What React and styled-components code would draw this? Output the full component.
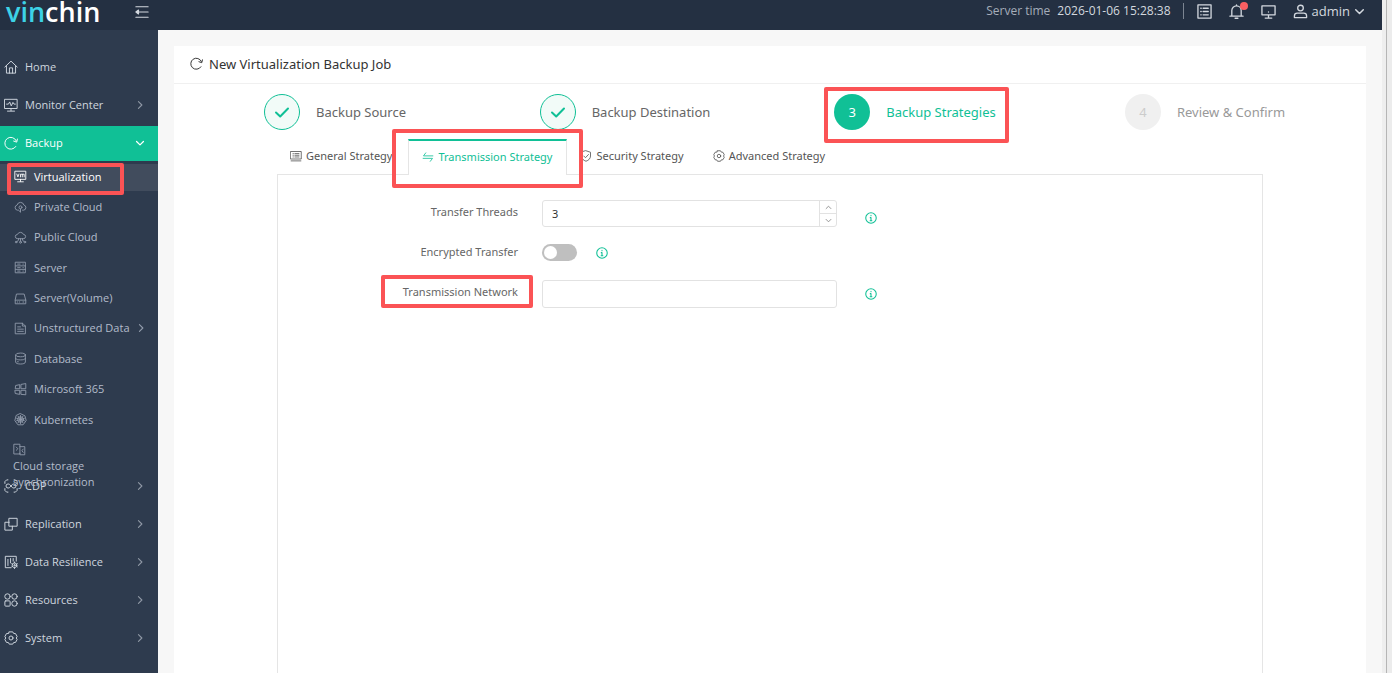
import React, { useState } from "react";
import styled, { createGlobalStyle, css } from "styled-components";

const GlobalStyle = createGlobalStyle`
  * {
    box-sizing: border-box;
  }

  body {
    margin: 0;
    background: #f7f7f7;
    font-family: "Open Sans", "Noto Sans", sans-serif;
    font-size: 11px;
    color: #666;
  }

  button,
  input {
    font-family: inherit;
  }
`;

const Svg = styled.svg`
  width: ${({ $size }) => $size || 14}px;
  height: ${({ $size }) => $size || 14}px;
  flex: none;
  fill: none;
  stroke: currentColor;
  stroke-width: ${({ $weight }) => $weight || 1.1};
  stroke-linecap: round;
  stroke-linejoin: round;
`;

const shapes = {
  home: <path d="M1 8 8 1.3 15 8M2.8 6.8V15h10.4V6.8M6.2 15V9h3.6v6" />,
  monitor: (
    <path d="M1 1.5h14v10.5H1zM8 12v2.6M4 15h8M3 7h2l1.5-2.5L8.3 9l1.9-4L11.500 7H13" />
  ),
  backup: <path d="M14 5.500A6.800 6.800 0 1 0 13.500 12M15.300 3.500l-.8 3.500-3.500-1.200" />,
  vm: (
    <>
      <path d="M1.500 1.500h13v10h-13zM8 11.500v2.500M4.500 14.500h7" />
      <path d="M3.500 5l1.300 3.500L6.100 5M8 8.500V5.200h4.500v3.300M10.200 5.500v3" />
    </>
  ),
  privateCloud: (
    <>
      <path d="M5.500 12.500H4.200a3.200 3.200 0 0 1-.3-6.300 4.200 4.200 0 0 1 8.200 0 3.200 3.200 0 0 1-.3 6.300h-1.300" />
      <circle cx="8" cy="9" r="1.800" />
      <path d="M8 11v3.500M6.300 13.300 8 14.800" />
    </>
  ),
  publicCloud: (
    <>
      <path d="M4.200 9.500a2.600 2.600 0 0 1 0-5.200 4 4 0 0 1 7.500 0 2.600 2.600 0 0 1 0 5.200z" />
      <path d="M8 9.500v3M5.500 9.500v2L3.500 13M10.500 9.500v2l2 1.500" />
      <circle cx="8" cy="13.800" r="1.200" />
      <circle cx="2.600" cy="13.600" r="1" />
      <circle cx="13.400" cy="13.600" r="1" />
    </>
  ),
  server: (
    <path d="M2 1.500h12v13H2zM2 6h12M2 10.300h12M4.500 3.800h3M4.500 8.200h3M4.500 12.400h3M11 3.800h.5M11 8.200h.5M11 12.400h.5" />
  ),
  volume: (
    <path d="M3.500 2.500h9L14.500 10v4.500h-13V10zM1.500 10h13M4 12.300h.5M6.500 12.300H7M11 12.300h1" />
  ),
  file: (
    <path d="M2 1.500h8.500L14 5v9.500H2zM10.300 1.500V5H14M4.500 6H8M4.500 8.800h7M4.500 11.500h7" />
  ),
  database: (
    <>
      <path d="M2 3.800v8.600C2 14 5 14.800 8 14.800s6-.8 6-2.400V3.800" />
      <ellipse cx="8" cy="3.600" rx="6" ry="2.300" />
      <path d="M2 8c1 1.500 3 1.700 6 1.700s5-.2 6-1.700M4.300 12h1" />
    </>
  ),
  office: (
    <path d="M2.500 3l4.500-1v5H2zM9 1.700l5.500-1V7H9zM1.500 9H7v5l-5-1zM9 9h5.500v5.500L9 14z" />
  ),
  kubernetes: (
    <>
      <path d="M8 .8l5.500 2.700 1.500 5.800-3.800 5.200H4.800L1 9.300l1.500-5.800z" />
      <circle cx="8" cy="8" r="3.500" />
      <circle cx="8" cy="8" r="1" />
      <path d="M8 3v10M3.200 6.500l9.600 3M12.800 6.500l-9.600 3M5 12l6-8M11 12 5 4" />
    </>
  ),
  cloudSync: (
    <path d="M1.500 1.500h7v12h-7zM8.500 4.500h6v10h-6v-2M4 5l2 2-2 2M12.500 7.500l-1.500 2 1.500 2" />
  ),
  cdp: (
    <>
      <path d="M1 5V3L3 1h1.500M11.500 1H13l2 2v2M1 11v2l2 2h1.500M11.500 15H13l2-2v-2" />
      <path d="M8 8C6.800 6.200 5.800 5.700 4.600 5.700a2.300 2.300 0 0 0 0 4.600C5.800 10.300 6.800 9.800 8 8s2.200-2.300 3.400-2.300a2.300 2.300 0 0 1 0 4.600C10.200 10.300 9.200 9.800 8 8z" />
    </>
  ),
  replication: <path d="M6 1.500h9v9H6zM6 6H1v9h8.500v-4.500" />,
  resilience: (
    <>
      <path d="M8 14.500H1.500v-13h12.500V7M4.500 5v7M7.500 4v5M10.500 4v3" />
      <circle cx="12" cy="11.700" r="2.700" />
      <circle cx="12" cy="11.700" r=".8" />
      <path d="M12 8v1M12 14.400v1M8.800 10l.8.5M14.400 13l.8.500M8.800 13.500l.8-.5M14.400 10.400l.8-.5" />
    </>
  ),
  resources: (
    <>
      <circle cx="4" cy="4" r="3.100" />
      <circle cx="12" cy="4" r="3.100" />
      <rect x="1" y="9" width="6" height="6" rx="1" />
      <circle cx="12" cy="12" r="3.100" />
    </>
  ),
  gear: (
    <>
      <path d="M6 1h4l1 1.800 2.200.2 1.800 3.300L14 8l1 1.700-1.800 3.300-2.200.2L10 15H6l-1-1.800-2.200-.2L1 9.700 2 8 1 6.300 2.800 3l2.200-.2z" />
      <circle cx="8" cy="8" r="2.300" />
    </>
  ),
  right: <path d="M5.500 2.500 11 8l-5.500 5.500" />,
  down: <path d="M2.500 5.500 8 11l5.500-5.500" />,
  up: <path d="M2.500 10.500 8 5l5.500 5.500" />,
  fold: (
    <>
      <path d="M1 2h14M5 8h10M1 14h14" />
      <path d="M4 5.800 1 8l3 2.200z" fill="currentColor" />
    </>
  ),
  tasks: <path d="M1 1h14v14H1zM4 4.500h.5M6.500 4.500H12M4 8h.5M6.500 8H12M4 11.500h.5M6.500 11.500H12" />,
  bell: <path d="M1 13h14M3 13V7a5 5 0 0 1 10 0v6M8 2V1M6.500 15.200h3" />,
  screen: <path d="M1 2h14v9.500H1zM8 11.500V15M4.500 15h7M8 8.500v0" />,
  user: (
    <>
      <circle cx="8" cy="4.300" r="3" />
      <path d="M1.500 14.500v-1.700a3 3 0 0 1 3-3h7a3 3 0 0 1 3 3v1.700z" />
    </>
  ),
  check: <path d="M2 8.500 6.200 12.500 14 4.500" />,
  list: (
    <path d="M1 2h14v10H1zM1.500 14.500h13M4 4.800h.5M6.500 4.800H12M4 7h.5M6.500 7H12M4 9.300h.5M6.500 9.300H12" />
  ),
  transfer: <path d="M14.500 6.500H2L5 2.500M1.500 9.800H14l-3 4" />,
  shield: <path d="M8 1l6 2v5c0 3.500-2.500 5.700-6 7-3.500-1.300-6-3.500-6-7V3zM5 8l2.300 2.300L11.300 6" />,
  info: (
    <>
      <circle cx="8" cy="8" r="7" />
      <path d="M8 4.500v.6M7 7.500h1v4M6.800 11.600h2.400" />
    </>
  ),
};

const Icon = ({ name, size, weight }) => (
  <Svg viewBox="0 0 16 16" $size={size} $weight={weight} aria-hidden="true">
    {shapes[name]}
  </Svg>
);

const Window = styled.div`
  display: flex;
  min-height: 100vh;
`;

const Page = styled.div`
  flex: 1;
  min-width: 0;
  display: flex;
  flex-direction: column;
`;

const WindowEdge = styled.div`
  width: 10px;
  border-left: 4px solid #eeeeee;
  background: linear-gradient(90deg, #b5b5b5 1px, #ececec 1px);
`;

const TopBar = styled.header`
  height: 30px;
  display: flex;
  align-items: flex-start;
  justify-content: space-between;
  background: #243042;
  color: #d3d8df;
`;

const Brand = styled.div`
  display: flex;
  align-items: center;
  gap: 35px;
  padding-left: 6px;
  height: 23px;
`;

const Logo = styled.a`
  color: #fff;
  font-size: 27px;
  font-weight: 600;
  line-height: 23px;
  text-decoration: none;

  span {
    color: #3dd2e6;
  }
`;

const IconButton = styled.button`
  position: relative;
  display: flex;
  align-items: center;
  gap: 4px;
  padding: 0;
  border: 0;
  background: none;
  color: inherit;
  font-size: 13px;
`;

const Dot = styled.span`
  position: absolute;
  top: -2px;
  right: -4px;
  width: 8px;
  height: 8px;
  border-radius: 50%;
  background: #f95f62;
`;

const Tools = styled.div`
  display: flex;
  align-items: center;
  gap: 17px;
  height: 22px;
  padding-right: 17px;
`;

const Clock = styled.div`
  display: flex;
  gap: 7px;
  margin-right: -4px;
  padding-right: 12px;
  border-right: 1px solid #7c8592;
  font-size: 12px;
  line-height: 16px;

  span {
    color: #a5adb9;
  }
`;

const Body = styled.div`
  flex: 1;
  display: flex;
`;

const Sidebar = styled.nav`
  width: 158px;
  flex: none;
  padding-top: 20px;
  background: #2e3b4e;
`;

const Menu = styled.ul`
  margin: 0;
  padding: 0;
  list-style: none;
`;

const MenuLink = styled.a`
  display: flex;
  align-items: center;
  gap: 7px;
  height: 35px;
  margin-bottom: 3px;
  padding: 0 13px 2px 4px;
  color: ${({ $active }) => ($active ? "#fff" : "#cfd6df")};
  background: ${({ $active }) => ($active ? "#10c096" : "transparent")};
  text-decoration: none;

  span {
    flex: 1;
  }

  svg:last-child:not(:first-child) {
    opacity: ${({ $active }) => ($active ? 1 : 0.6)};
  }
`;

const SubMenu = styled(Menu)`
  display: grid;
  grid-template-columns: minmax(0, 1fr);
  grid-auto-rows: minmax(0, 1fr);
  height: 304px;
  margin-bottom: 1px;
`;

const SubLink = styled.a`
  position: relative;
  display: flex;
  align-items: center;
  gap: 7px;
  height: 27px;
  padding: 0 12px 2px 14px;
  color: ${({ $active }) => ($active ? "#fff" : "#b3bccb")};
  background: ${({ $active }) => ($active ? "#414c5d" : "transparent")};
  text-decoration: none;

  svg {
    opacity: ${({ $active }) => ($active ? 1 : 0.75)};
  }

  span {
    flex: 1;
    min-width: 0;
    line-height: 16px;
    white-space: nowrap;
  }

  ${({ $stacked }) =>
    $stacked &&
    css`
      flex-direction: column;
      align-items: flex-start;
      gap: 2px;
      height: auto;
      padding: 5px 12px 0 13px;

      span {
        white-space: normal;
      }
    `}
`;

// red frame drawn over the page around a part
const Mark = styled.i`
  position: absolute;
  z-index: 2;
  inset: ${({ $inset }) => $inset};
  border: 4px solid #fb5355;
  border-radius: 2px;
  pointer-events: none;
`;

const Main = styled.main`
  flex: 1;
  min-width: 0;
  display: flex;
  padding: 16px 16px 0;
  background: #f7f7f7;
  font-family: "Noto Sans", "Open Sans", sans-serif;
`;

const Card = styled.section`
  flex: 1;
  display: flex;
  flex-direction: column;
  background: #fff;
`;

const CardTitle = styled.h1`
  display: flex;
  align-items: center;
  gap: 6px;
  height: 38px;
  margin: 0;
  padding: 0 16px 2px;
  border-bottom: 1px solid #f0f0f0;
  font-size: 13px;
  font-weight: 400;
  color: #333;
`;

const CardBody = styled.div`
  flex: 1;
  display: flex;
  flex-direction: column;
  padding: 10px 16px 0;
`;

const Steps = styled.ol`
  display: grid;
  grid-template-columns: repeat(4, 1fr);
  margin: 0 0 9px;
  padding: 0;
  list-style: none;
`;

const Step = styled.li`
  display: flex;
  justify-content: center;
`;

const StepInner = styled.div`
  position: relative;
  display: flex;
  align-items: center;
  gap: 16px;
  font-size: 13px;
  color: ${({ $state }) =>
    ({ done: "#666", current: "#10c096", next: "#999" })[$state]};
`;

const StepCircle = styled.span`
  display: flex;
  align-items: center;
  justify-content: center;
  width: 36px;
  height: 36px;
  border-radius: 50%;
  border: 1px solid transparent;
  font-size: 13px;

  ${({ $state }) =>
    $state === "done" &&
    css`
      border-color: #10c096;
      background: #f2fbf8;
      color: #10c096;
    `}
  ${({ $state }) =>
    $state === "current" &&
    css`
      background: #10c096;
      color: #fff;
    `}
  ${({ $state }) =>
    $state === "next" &&
    css`
      background: #f0f0f0;
      color: #ccc;
    `}
`;

const Strategy = styled.div`
  flex: 1;
  display: flex;
  flex-direction: column;
  width: 85%;
  margin: 0 auto;
`;

const Tabs = styled.div`
  display: flex;
  height: 35px;
`;

const Tab = styled.button`
  position: relative;
  display: flex;
  align-items: center;
  gap: 4px;
  padding: 0 15px 2px 12px;
  border: 1px solid transparent;
  border-width: 0 1px;
  background: none;
  font-size: 11px;
  color: #555;
  white-space: nowrap;

  ${({ $active }) =>
    $active &&
    css`
      margin-bottom: -1px;
      padding: 0 14px 3px 13px;
      border-color: #e5e5e5;
      border-top: 2px solid #10c096;
      background: #fff;
      color: #10c096;
    `}
`;

const Panel = styled.form`
  flex: 1;
  padding-top: 25px;
  border: 1px solid #e5e5e5;
  border-bottom: 0;
`;

const FormRow = styled.div`
  display: flex;
  align-items: flex-start;
  gap: 18px;
  height: 40px;
`;

const LabelCell = styled.div`
  width: 25%;
  display: flex;
  justify-content: flex-end;
  padding-right: 6px;
`;

const Label = styled.label`
  position: relative;
  line-height: 24px;
`;

const Field = styled.div`
  flex: 1;
  display: flex;
  align-items: center;
  gap: ${({ $gap }) => $gap || 28}px;
  height: ${({ $height }) => $height || 28}px;
  color: #10c096;
`;

const Input = styled.input`
  width: 41%;
  height: 28px;
  padding: 0 9px;
  border: 1px solid #e2e2e2;
  border-radius: 3px;
  outline: none;
  background: #fff;
  color: #333;
  font-size: 11px;
`;

const Spinner = styled.div`
  display: flex;
  align-self: flex-start;
  width: 41%;
  height: 27px;
  border: 1px solid #e2e2e2;
  border-radius: 3px;

  input {
    flex: 1;
    min-width: 0;
    height: 25px;
    padding: 0 9px;
    border: 0;
    outline: none;
    background: none;
    color: #333;
    font-size: 11px;
    appearance: textfield;
  }

  input::-webkit-inner-spin-button {
    appearance: none;
  }
`;

const SpinButtons = styled.div`
  display: flex;
  flex-direction: column;
  width: 17px;
  border-left: 1px solid #e2e2e2;
`;

const SpinButton = styled.button`
  flex: 1;
  display: flex;
  align-items: center;
  justify-content: center;
  padding: 0;
  border: 0;
  background: none;
  color: #888;

  & + & {
    border-top: 1px solid #e2e2e2;
  }
`;

const Switch = styled.input`
  appearance: none;
  display: flex;
  align-items: center;
  width: 35px;
  height: 17px;
  margin: 0;
  padding: 0 2px;
  border-radius: 9px;
  background: #bfbfbf;

  &::before {
    content: "";
    width: 13px;
    height: 13px;
    border-radius: 50%;
    background: #fff;
  }

  &:checked {
    justify-content: flex-end;
    background: #10c096;
  }
`;

const backupItems = [
  { icon: "vm", label: "Virtualization", active: true },
  { icon: "privateCloud", label: "Private Cloud" },
  { icon: "publicCloud", label: "Public Cloud" },
  { icon: "server", label: "Server" },
  { icon: "volume", label: "Server(Volume)" },
  { icon: "file", label: "Unstructured Data", more: true },
  { icon: "database", label: "Database" },
  { icon: "office", label: "Microsoft 365" },
  { icon: "kubernetes", label: "Kubernetes" },
  { icon: "cloudSync", label: "Cloud storage synchronization", stacked: true },
];

const menuItems = [
  { icon: "home", label: "Home" },
  { icon: "monitor", label: "Monitor Center", more: true },
  { icon: "backup", label: "Backup", items: backupItems },
  { icon: "cdp", label: "CDP", more: true },
  { icon: "replication", label: "Replication", more: true },
  { icon: "resilience", label: "Data Resilience", more: true },
  { icon: "resources", label: "Resources", more: true },
  { icon: "gear", label: "System", more: true },
];

const steps = [
  { label: "Backup Source", state: "done" },
  { label: "Backup Destination", state: "done" },
  { label: "Backup Strategies", state: "current" },
  { label: "Review & Confirm", state: "next" },
];

const tabs = [
  { icon: "list", label: "General Strategy" },
  { icon: "transfer", label: "Transmission Strategy", active: true },
  { icon: "shield", label: "Security Strategy" },
  { icon: "gear", label: "Advanced Strategy" },
];

const Navigation = () => (
  <Sidebar>
    <Menu>
      {menuItems.map(({ icon, label, more, items }) => (
        <li key={label}>
          <MenuLink href="#" $active={!!items}>
            <Icon name={icon} />
            <span>{label}</span>
            {more && <Icon name="right" size={10} weight={1.8} />}
            {items && <Icon name="down" size={10} weight={2} />}
          </MenuLink>
          {items && (
            <SubMenu>
              {items.map((item) => (
                <li key={item.label}>
                  <SubLink href="#" $active={item.active} $stacked={item.stacked}>
                    <Icon name={item.icon} size={13} />
                    <span>{item.label}</span>
                    {item.more && <Icon name="right" size={10} weight={1.8} />}
                    {item.active && <Mark $inset="-1px 34px -4px 7px" />}
                  </SubLink>
                </li>
              ))}
            </SubMenu>
          )}
        </li>
      ))}
    </Menu>
  </Sidebar>
);

const Header = () => (
  <TopBar>
    <Brand>
      <Logo href="#">
        <span>vin</span>chin
      </Logo>
      <IconButton aria-label="Collapse menu">
        <Icon name="fold" size={14} weight={1.3} />
      </IconButton>
    </Brand>
    <Tools>
      <Clock>
        <span>Server time</span>
        <time>2026-01-06 15:28:38</time>
      </Clock>
      <IconButton aria-label="Tasks">
        <Icon name="tasks" size={15} weight={1.4} />
      </IconButton>
      <IconButton aria-label="Alerts">
        <Icon name="bell" size={15} weight={1.4} />
        <Dot />
      </IconButton>
      <IconButton aria-label="Screen">
        <Icon name="screen" size={15} weight={1.4} />
      </IconButton>
      <IconButton>
        <Icon name="user" size={15} weight={1.4} />
        admin
        <Icon name="down" size={11} weight={2.2} />
      </IconButton>
    </Tools>
  </TopBar>
);

const StrategyForm = () => {
  const [threads, setThreads] = useState(3);
  const [encrypted, setEncrypted] = useState(false);

  return (
    <Panel>
      <FormRow>
        <LabelCell>
          <Label htmlFor="threads">Transfer Threads</Label>
        </LabelCell>
        <Field $height={36}>
          <Spinner>
            <input
              id="threads"
              type="number"
              value={threads}
              onChange={(e) => setThreads(Number(e.target.value))}
            />
            <SpinButtons>
              <SpinButton
                type="button"
                aria-label="Increase"
                onClick={() => setThreads(threads + 1)}
              >
                <Icon name="up" size={7} weight={2} />
              </SpinButton>
              <SpinButton
                type="button"
                aria-label="Decrease"
                onClick={() => setThreads(threads - 1)}
              >
                <Icon name="down" size={7} weight={2} />
              </SpinButton>
            </SpinButtons>
          </Spinner>
          <Icon name="info" size={12} weight={1.4} />
        </Field>
      </FormRow>
      <FormRow>
        <LabelCell>
          <Label htmlFor="encrypted">Encrypted Transfer</Label>
        </LabelCell>
        <Field $height={25} $gap={19}>
          <Switch
            id="encrypted"
            type="checkbox"
            checked={encrypted}
            onChange={(e) => setEncrypted(e.target.checked)}
          />
          <Icon name="info" size={12} weight={1.4} />
        </Field>
      </FormRow>
      <FormRow>
        <LabelCell>
          <Label htmlFor="network">
            Transmission Network
            <Mark $inset="-5px -15px -4px -22px" />
          </Label>
        </LabelCell>
        <Field>
          <Input id="network" type="text" />
          <Icon name="info" size={12} weight={1.4} />
        </Field>
      </FormRow>
    </Panel>
  );
};

const App = () => {
  return (
    <Window>
      <GlobalStyle />
      <Page>
        <Header />
        <Body>
          <Navigation />
          <Main>
            <Card>
              <CardTitle>
                <Icon name="backup" size={13} weight={1.2} />
                New Virtualization Backup Job
              </CardTitle>
              <CardBody>
                <Steps>
                  {steps.map(({ label, state }, i) => (
                    <Step key={label}>
                      <StepInner $state={state}>
                        <StepCircle $state={state}>
                          {state === "done" ? (
                            <Icon name="check" size={16} weight={2} />
                          ) : (
                            i + 1
                          )}
                        </StepCircle>
                        {label}
                        {state === "current" && (
                          <Mark $inset="-7px -13px -13px -10px" />
                        )}
                      </StepInner>
                    </Step>
                  ))}
                </Steps>
                <Strategy>
                  <Tabs>
                    {tabs.map(({ icon, label, active }) => (
                      <Tab key={label} type="button" $active={active}>
                        <Icon name={icon} size={12} />
                        {label}
                        {active && <Mark $inset="-12px -17px -13px -17px" />}
                      </Tab>
                    ))}
                  </Tabs>
                  <StrategyForm />
                </Strategy>
              </CardBody>
            </Card>
          </Main>
        </Body>
      </Page>
      <WindowEdge />
    </Window>
  );
};

export default App;
